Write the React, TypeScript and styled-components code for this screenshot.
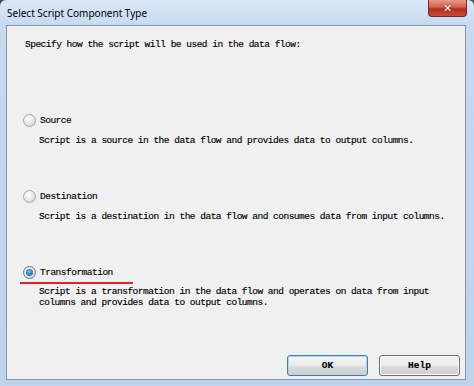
import styled, { createGlobalStyle } from "styled-components";

const GlobalStyle = createGlobalStyle`
  html, body {
    margin: 0;
    padding: 0;
    width: 474px;
    height: 386px;
    overflow: hidden;
    background: #4a4f57;
  }
`;

const Window = styled.div`
  width: 474px;
  height: 386px;
  box-sizing: border-box;
  display: flex;
  flex-direction: column;
  border-radius: 6px 6px 0 0;
  background: linear-gradient(to bottom, #dbe8f6 0px, #c6daf0 25px, #bdd3ec 100%);
`;

const TitleBar = styled.div`
  height: 25px;
  display: flex;
  align-items: flex-start;
  justify-content: space-between;
  padding: 0 7px 0 7px;
  box-sizing: border-box;
`;

const Title = styled.div`
  font-family: "Noto Sans", "Open Sans", sans-serif;
  font-size: 10px;
  color: #000;
  line-height: 13px;
  margin-top: 7px;
`;

const CloseButton = styled.div`
  width: 39px;
  height: 17px;
  box-sizing: border-box;
  border: 1px solid #6e2c28;
  border-top: none;
  border-radius: 0 0 4px 4px;
  background: linear-gradient(to bottom, #e89a8a 0%, #d2604e 45%, #b42d20 55%, #c84a36 100%);
  display: flex;
  align-items: center;
  justify-content: center;
  color: #fff;
  font-family: "DejaVu Sans", sans-serif;
  font-weight: bold;
  font-size: 11px;
  text-shadow: 0 0 2px #5a1a14;
`;

const Client = styled.div`
  flex: 1;
  margin: 0 8px 6px 6px;
  border: 1px solid #8797ab;
  background: #f0f0f0;
  display: flex;
  flex-direction: column;
  padding: 13px 0 0 0;
  font-family: "Liberation Mono", "DejaVu Sans Mono", monospace;
  font-size: 9.5px;
  line-height: 11px;
  letter-spacing: -0.5px;
  color: #000;
  -webkit-text-stroke: 0.15px #000;
`;

const Prompt = styled.div`
  padding-left: 18px;
`;

const Option = styled.div<{ $gap: number }>`
  margin-top: ${({ $gap }) => $gap}px;
  display: flex;
  flex-direction: column;
`;

const RadioRow = styled.label`
  display: flex;
  align-items: center;
  height: 13px;
  padding-left: 16px;
  gap: 4px;
`;

const Radio = styled.span<{ $checked?: boolean }>`
  width: 13px;
  height: 13px;
  box-sizing: border-box;
  border-radius: 50%;
  border: 1px solid ${({ $checked }) => ($checked ? "#4d7ea8" : "#a3a7ab")};
  background: radial-gradient(circle at 40% 35%, #ffffff 0%, #e6e6e6 55%, #c9c9c9 100%);
  display: flex;
  align-items: center;
  justify-content: center;

  &::after {
    content: "";
    display: ${({ $checked }) => ($checked ? "block" : "none")};
    width: 5px;
    height: 5px;
    border-radius: 50%;
    background: radial-gradient(circle at 40% 35%, #8fd0f5 0%, #2f86c8 50%, #17477a 100%);
    box-shadow: 0 0 0 1px #3a6e9c;
  }
`;

const Underline = styled.div`
  width: 113px;
  height: 2px;
  margin: 3px 0 0 13px;
  background: #e02424;
`;

const Description = styled.div<{ $gap: number }>`
  margin-top: ${({ $gap }) => $gap}px;
  padding-left: 32px;
  white-space: pre;
`;

const ButtonRow = styled.div`
  margin-top: auto;
  display: flex;
  justify-content: flex-end;
  gap: 11px;
  padding: 0 5px 3px 0;
`;

const Button = styled.button<{ $default?: boolean }>`
  width: 81px;
  height: 21px;
  box-sizing: border-box;
  border-radius: 3px;
  border: 1px solid ${({ $default }) => ($default ? "#3c7fb1" : "#707070")};
  background: linear-gradient(to bottom, #f4f4f4 0%, #ebebeb 50%, #dddddd 51%, #cfcfcf 100%);
  box-shadow: inset 0 0 0 1px ${({ $default }) => ($default ? "#a6d8f5" : "#fcfcfc")};
  font-family: "Liberation Mono", "DejaVu Sans Mono", monospace;
  font-size: 9.5px;
  font-weight: bold;
  color: #000;
  padding: 0;
`;

const options = [
  {
    label: "Source",
    desc: "Script is a source in the data flow and provides data to output columns.",
    gap: 64,
  },
  {
    label: "Destination",
    desc: "Script is a destination in the data flow and consumes data from input columns.",
    gap: 44,
  },
  {
    label: "Transformation",
    desc: "Script is a transformation in the data flow and operates on data from input\ncolumns and provides data to output columns.",
    gap: 44,
    checked: true,
  },
];

export default function App() {
  return (
    <>
      <GlobalStyle />
      <Window>
        <TitleBar>
          <Title>Select Script Component Type</Title>
          <CloseButton>✕</CloseButton>
        </TitleBar>
        <Client>
          <Prompt>Specify how the script will be used in the data flow:</Prompt>
          {options.map((o) => (
            <Option key={o.label} $gap={o.gap}>
              <RadioRow>
                <Radio $checked={o.checked} />
                {o.label}
              </RadioRow>
              {o.checked && <Underline />}
              <Description $gap={o.checked ? 2 : 8}>{o.desc}</Description>
            </Option>
          ))}
          <ButtonRow>
            <Button $default>OK</Button>
            <Button>Help</Button>
          </ButtonRow>
        </Client>
      </Window>
    </>
  );
}
